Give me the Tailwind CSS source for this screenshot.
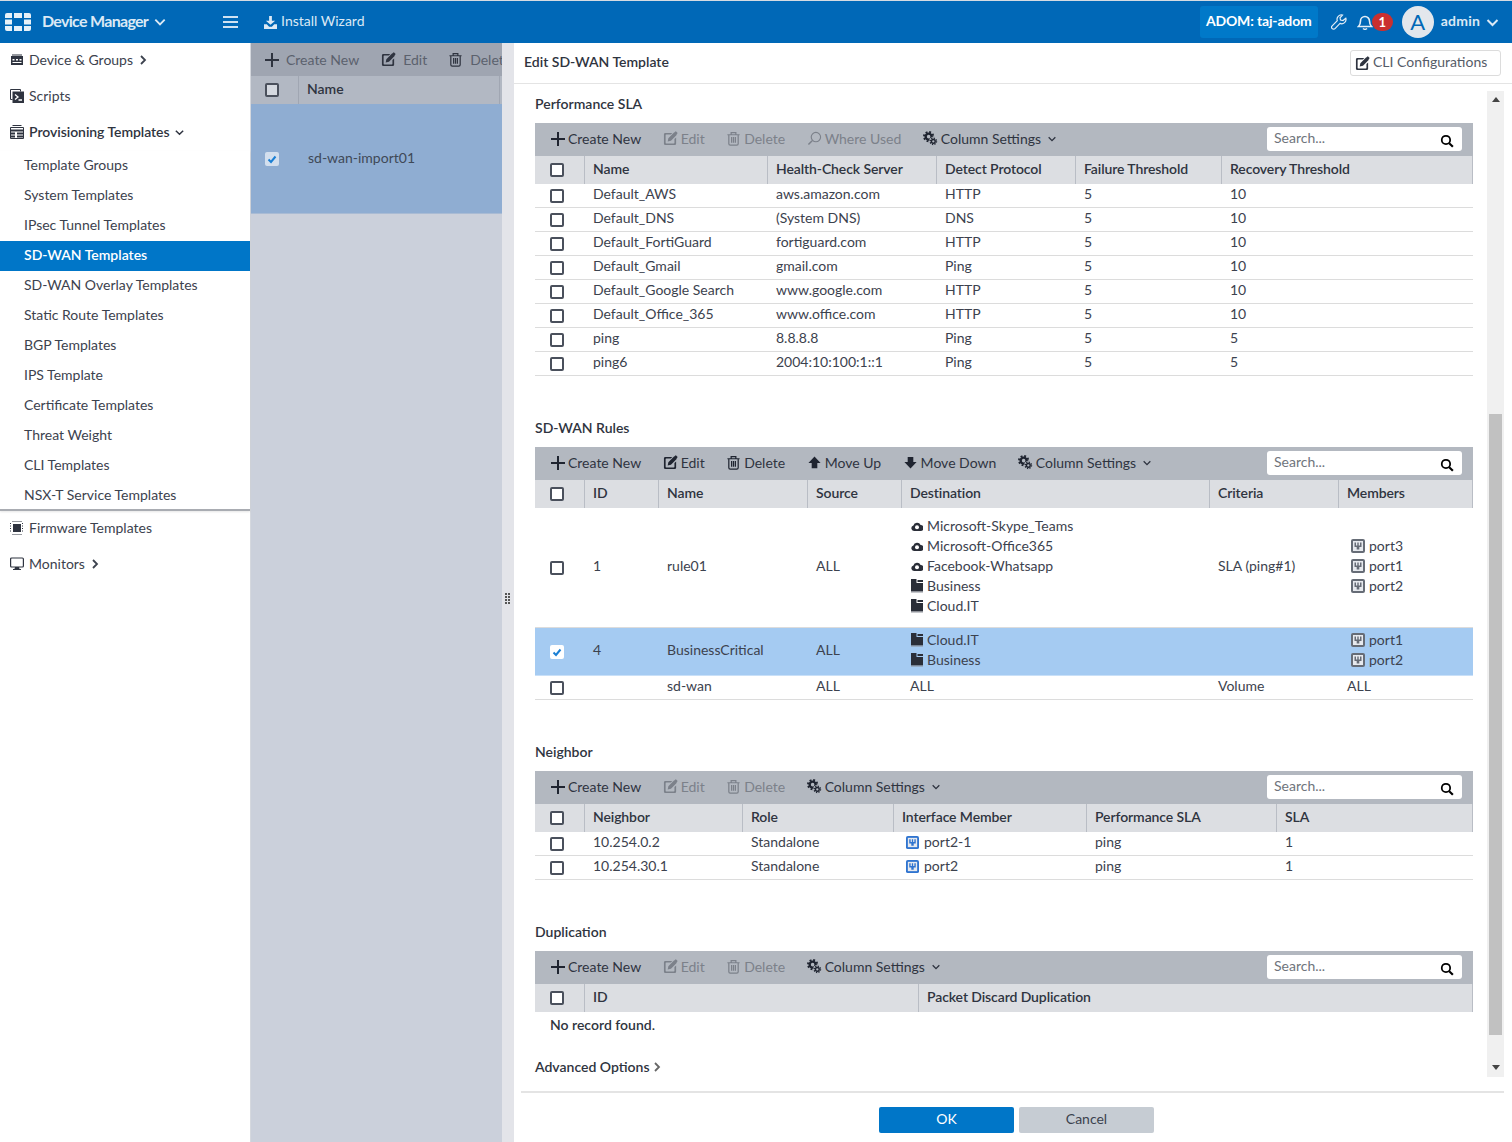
<!DOCTYPE html>
<html lang="en">
<head>
    <meta charset="UTF-8">
    <title>Edit SD-WAN Template</title>
    <script src="https://cdn.jsdelivr.net/npm/@tailwindcss/browser@4"></script>
</head>
<body class="h-[1142px] w-[1512px] overflow-hidden bg-white font-['Lato','Open_Sans',sans-serif] text-[14px] leading-[20px] text-[#3c424e]">
    <!-- icon sprite -->
    <svg class="hidden">
        <symbol id="i-plus" viewBox="0 0 16 16"><path fill="currentColor" d="M7 1h2v6h6v2H9v6H7V9H1V7h6z"/></symbol>
        <symbol id="i-edit" viewBox="0 0 16 16"><path fill="currentColor" d="M2.5 2H10L8.2 3.8H3.5a.7.7 0 0 0-.7.7v8a.7.7 0 0 0 .7.7h8a.7.7 0 0 0 .7-.7V8.6L14 6.8v6.7a1.5 1.5 0 0 1-1.5 1.5h-10A1.5 1.5 0 0 1 1 13.500v-10A1.500 1.500 0 0 1 2.500 2zM12 1.200l2.800 2.800-6.300 6.500-3.500.7.700-3.500zM13.200 .6l.5-.3 1.900 1.900-.3.500-1 1-2.100-2.100z"/></symbol>
        <symbol id="i-trash" viewBox="0 0 16 16"><path fill="none" stroke="currentColor" stroke-width="1.300" d="M1.500 4h13M3 4v9.500A1.500 1.500 0 0 0 4.500 15h7a1.500 1.500 0 0 0 1.500-1.500V4M5.500 4V1.700h5V4M6 6.500v6M8 6.500v6M10 6.500v6"/></symbol>
        <symbol id="i-where" viewBox="0 0 16 16"><circle cx="9.500" cy="6.500" r="5" fill="none" stroke="currentColor" stroke-width="1.200"/><path stroke="currentColor" stroke-width="1.600" d="M5.500 10.500 1.500 14.500"/></symbol>
        <symbol id="i-gears" viewBox="0 0 16 16"><circle cx="6" cy="6" r="3.200" fill="none" stroke="currentColor" stroke-width="2.600"/><circle cx="6" cy="6" r="5" fill="none" stroke="currentColor" stroke-width="2" stroke-dasharray="2 1.930"/><circle cx="11" cy="11" r="4.700" fill="#b3b8c0"/><circle cx="11" cy="11" r="2" fill="none" stroke="currentColor" stroke-width="1.500"/><circle cx="11" cy="11" r="3.400" fill="none" stroke="currentColor" stroke-width="1.500" stroke-dasharray="1.300 1.370"/></symbol>
        <symbol id="i-cloud" viewBox="0 0 12 12"><path fill="currentColor" d="M3 11a2.800 2.800 0 0 1-.6-5.500A3.800 3.800 0 0 1 9.600 5 3 3 0 0 1 9.500 11z"/><circle cx="6" cy="7.300" r="2" fill="#fff"/></symbol>
        <symbol id="i-group" viewBox="0 0 12 14"><path fill="currentColor" d="M0 0h5.500v4H12v8.500H0zM6.500 1H12v2H6.500z"/><path fill="#8b8f96" d="M0 12.500h12V13.500H0z"/></symbol>
        <symbol id="i-port" viewBox="0 0 14 14"><rect width="14" height="14" rx="2" fill="currentColor"/><rect x="2" y="2" width="10" height="10" fill="#e6e9ee"/><path fill="currentColor" d="M3.500 3.500h1.500v3h1.300v-3h1.400v3H9v-3h1.500V8H8.300v2.500H5.700V8H3.500z"/></symbol>
        <symbol id="i-search" viewBox="0 0 16 16"><circle cx="6.800" cy="6.800" r="4.800" fill="none" stroke="currentColor" stroke-width="2"/><path stroke="currentColor" stroke-width="2.400" d="m10.500 10.500 4.200 4.200"/></symbol>
        <symbol id="i-chev" viewBox="0 0 12 12"><path fill="none" stroke="currentColor" stroke-width="1.600" d="m2 4 4 4 4-4"/></symbol>
        <symbol id="i-right" viewBox="0 0 12 12"><path fill="none" stroke="currentColor" stroke-width="1.800" d="m4 2 4 4-4 4"/></symbol>
        <symbol id="i-check" viewBox="0 0 14 14"><path fill="none" stroke="#1a7fd4" stroke-width="2" d="m3.500 7.500 2.500 2.500 4.500-5.500"/></symbol>
    </svg>

    <!-- top bar -->
    <header class="flex h-[43px] items-center border-t border-t-[#d5dbe2] bg-[#0068b7] text-white">
        <svg class="ml-[5px] h-[18px] w-[26px] shrink-0" viewBox="0 0 26 18" fill="#e8f1f8">
            <path d="M2 0h5v5H0V2a2 2 0 0 1 2-2zM9 0h8v5H9zM19 0h5a2 2 0 0 1 2 2v3h-7zM0 6.500h7v5H0zM19 6.500h7v5h-7zM0 13h7v5H2a2 2 0 0 1-2-2zM9 13h8v5H9zM19 13h7v3a2 2 0 0 1-2 2h-5z"/>
        </svg>
        <span class="ml-[11px] -mt-[2px] text-[16px] font-bold tracking-[-0.7px] text-[#dbe9f5]">Device Manager</span>
        <svg class="ml-[5px] h-[14px] w-[14px] text-[#dbe9f5]"><use href="#i-chev"/></svg>
        <div class="ml-[56px] flex h-[12px] w-[15px] flex-col justify-between">
            <i class="block h-[2px] bg-[#cfe2f2]"></i><i class="block h-[2px] bg-[#cfe2f2]"></i><i class="block h-[2px] bg-[#cfe2f2]"></i>
        </div>
        <svg class="ml-[26px] h-[13px] w-[13px]" viewBox="0 0 14 14" fill="#dbe9f5"><path d="M5.500 0h3v5H12L7 9.500 2 5h3.500zM0 9h3l2.500 2.500h3L11 9h3v5H0z"/></svg>
        <span class="ml-[4px] -mt-[2px] text-[#dbe9f5]">Install Wizard</span>

        <div class="ml-auto flex h-[32px] w-[118px] items-center justify-center rounded-[3px] bg-[#0079c9] pb-[2px] font-bold tracking-[-0.15px]">ADOM: taj-adom</div>
        <svg class="ml-[13px] h-[16px] w-[16px]" viewBox="0 0 16 16" fill="none" stroke="#e4eef7" stroke-width="1.200"><path d="M14.800 4.200 12 6.500 9.500 6 9 3.800l2.500-2.700a4.300 4.300 0 0 0-5.200 5.600L1.200 11.800a1.900 1.900 0 0 0 2.800 2.800l5-5.200a4.300 4.300 0 0 0 5.800-5.200z"/></svg>
        <svg class="ml-[10px] h-[16px] w-[16px]" viewBox="0 0 16 16" fill="none" stroke="#e4eef7" stroke-width="1.600"><path d="M1.500 12.500c1.500-1.500 2-2.500 2-5.500a4.500 4.500 0 0 1 9 0c0 3 .5 4 2 5.500zM6 14.500c1 1 3 1 4 0"/></svg>
        <span class="-ml-[1px] flex h-[18px] w-[21px] items-center justify-center rounded-full bg-[#c9302f] text-[13px] font-bold">1</span>
        <span class="ml-[9px] flex h-[32px] w-[32px] items-center justify-center rounded-full bg-[#e3e7ec] text-[22px] text-[#0068b7]">A</span>
        <span class="ml-[7px] -mt-[2px] font-bold tracking-[0.2px] text-[#dbe9f5]">admin</span>
        <svg class="ml-[5px] mr-[12px] h-[15px] w-[15px] text-[#dbe9f5]"><use href="#i-chev"/></svg>
    </header>

    <div class="flex h-[1099px]">
        <!-- left nav -->
        <nav class="w-[251px] shrink-0 border-r border-[#d5d8de]">
            <a class="mb-[1px] flex h-[34px] items-center pl-[10px]">
                <svg class="h-[14px] w-[14px]" viewBox="0 0 14 14" fill="#2f3440"><path d="M1 3h12v9H1zm1.500 3v1.500h2V6zm3.500 0v1.500h2V6zm3.500 0v1.500h2V6zM2.500 9v1h9V9zM2 1.500h10V2.500H2z"/></svg>
                <span class="ml-[5px]">Device &amp; Groups</span>
                <svg class="ml-[4px] h-[12px] w-[12px]"><use href="#i-right"/></svg>
            </a>
            <a class="flex h-[36px] items-center pl-[10px]">
                <svg class="h-[14px] w-[14px]" viewBox="0 0 14 14"><path fill="none" stroke="#2f3440" d="M.5.5h10v2M.5.5v10h2"/><path fill="#2f3440" d="M2.500 2.500H14V14H2.500z"/><path fill="none" stroke="#fff" stroke-width="1.300" d="m5 5.500 3 2.500-3 2.500M8.500 11H12"/></svg>
                <span class="ml-[5px]">Scripts</span>
            </a>
            <a class="flex h-[36px] items-center pl-[10px] font-semibold text-[#2f3440]">
                <svg class="h-[14px] w-[14px]" viewBox="0 0 14 14" fill="none" stroke="#2f3440"><path d="M.5 2.500h13v11H.5zM2.500.5h9"/><path stroke-width="2" d="M1 5.500h12M1 8.500h4M7 8.500h6M1 11.500h4M7 11.500h6"/></svg>
                <span class="ml-[5px] tracking-[-0.05px]">Provisioning Templates</span>
                <svg class="ml-[4px] h-[11px] w-[11px]"><use href="#i-chev"/></svg>
            </a>
            <ul class="mt-[1px] border-b-2 border-[#a9acb2] shadow-[0_1px_2px_rgba(0,0,0,0.1)]">
                <li class="flex h-[30px] items-center pb-[2px] pl-[24px]">Template Groups</li>
                <li class="flex h-[30px] items-center pb-[2px] pl-[24px]">System Templates</li>
                <li class="flex h-[30px] items-center pb-[2px] pl-[24px]">IPsec Tunnel Templates</li>
                <li class="flex h-[30px] items-center bg-[#0076c8] pb-[2px] pl-[24px] font-semibold text-white">SD-WAN Templates</li>
                <li class="flex h-[30px] items-center pb-[2px] pl-[24px]">SD-WAN Overlay Templates</li>
                <li class="flex h-[30px] items-center pb-[2px] pl-[24px]">Static Route Templates</li>
                <li class="flex h-[30px] items-center pb-[2px] pl-[24px]">BGP Templates</li>
                <li class="flex h-[30px] items-center pb-[2px] pl-[24px]">IPS Template</li>
                <li class="flex h-[30px] items-center pb-[2px] pl-[24px]">Certificate Templates</li>
                <li class="flex h-[30px] items-center pb-[2px] pl-[24px]">Threat Weight</li>
                <li class="flex h-[30px] items-center pb-[2px] pl-[24px]">CLI Templates</li>
                <li class="flex h-[28px] items-center pl-[24px]">NSX-T Service Templates</li>
            </ul>
            <a class="flex h-[34px] items-center pl-[10px]">
                <svg class="h-[14px] w-[14px]" viewBox="0 0 14 14" fill="#2f3440"><path d="M3 3h8v8H3z"/><path stroke="#2f3440" stroke-dasharray="1 1" d="M0 2.500h2M0 5h2M0 7.500h2M0 10h2M12 2.500h2M12 5h2M12 7.500h2M12 10h2M3 1V0M5 1V0M7 1V0M9 1V0M11 1V0M3 14v-1M5 14v-1M7 14v-1M9 14v-1M11 14v-1"/></svg>
                <span class="ml-[5px]">Firmware Templates</span>
            </a>
            <a class="mt-[1px] flex h-[36px] items-center pl-[10px]">
                <svg class="h-[14px] w-[14px]" viewBox="0 0 14 14" fill="none" stroke="#2f3440" stroke-width="1.200"><rect x=".6" y="1" width="12.800" height="9" rx="1"/><path fill="#2f3440" stroke="none" d="M5 10h4l.5 2H11v1H3v-1h1.500z"/></svg>
                <span class="ml-[5px]">Monitors</span>
                <svg class="ml-[4px] h-[12px] w-[12px]"><use href="#i-right"/></svg>
            </a>
        </nav>

        <!-- template list -->
        <section class="w-[251px] shrink-0 overflow-hidden bg-[#cbd0db]">
            <div class="flex h-[33px] items-center whitespace-nowrap bg-[#9fa5b1] pl-[13px] text-[#5b616d]">
                <svg class="h-[16px] w-[16px] shrink-0 text-[#2f3440]"><use href="#i-plus"/></svg>
                <span class="ml-[6px]">Create New</span>
                <svg class="ml-[22px] h-[15px] w-[15px] shrink-0 text-[#2f3440]"><use href="#i-edit"/></svg>
                <span class="ml-[7px]">Edit</span>
                <svg class="ml-[21px] h-[15px] w-[15px] shrink-0 text-[#2f3440]"><use href="#i-trash"/></svg>
                <span class="ml-[7px]">Delete</span>
            </div>
            <div class="flex h-[28px] items-center bg-[#b2b8c3] font-semibold text-[#2f3440]">
                <span class="flex h-full w-[48px] items-center border-r border-[#a0a6b2] pl-[14px]">
                    <i class="block h-[14px] w-[14px] rounded-[2px] border-2 border-[#4a505c] bg-[#d5d9e0]"></i>
                </span>
                <span class="flex h-full w-[201px] items-center border-r border-[#a0a6b2] pb-[2px] pl-[8px]">Name</span>
            </div>
            <div class="flex h-[110px] items-center border-b border-[#a9bbd4] bg-[#8fadd2] pl-[14px] text-[#3f4957]">
                <span class="flex h-[14px] w-[14px] rounded-[2px] bg-[#d3dfee]"><svg class="h-[14px] w-[14px]"><use href="#i-check"/></svg></span>
                <span class="ml-[29px] -mt-[2px]">sd-wan-import01</span>
            </div>
        </section>

        <!-- splitter -->
        <div class="flex w-[12px] shrink-0 items-center justify-center bg-[#e3e4e9]">
            <div class="mr-[1px] mt-[12px] grid grid-cols-2 gap-x-[1px] gap-y-[1px]">
                <i class="block h-[2px] w-[2px] bg-[#555]"></i><i class="block h-[2px] w-[2px] bg-[#555]"></i>
                <i class="block h-[2px] w-[2px] bg-[#555]"></i><i class="block h-[2px] w-[2px] bg-[#555]"></i>
                <i class="block h-[2px] w-[2px] bg-[#555]"></i><i class="block h-[2px] w-[2px] bg-[#555]"></i>
                <i class="block h-[2px] w-[2px] bg-[#555]"></i><i class="block h-[2px] w-[2px] bg-[#555]"></i>
            </div>
        </div>

        <!-- edit pane -->
        <main class="flex min-w-0 flex-1 flex-col">
            <div class="flex h-[41px] shrink-0 items-center justify-between border-b border-[#e4e4e4] pl-[10px] pr-[11px]">
                <h1 class="-mt-[2px] font-semibold text-[#2f3440]">Edit SD-WAN Template</h1>
                <button class="flex h-[26px] w-[151px] items-center rounded-[3px] border border-[#dcdcdc] pb-[2px] pl-[4px] text-[#565c68]">
                    <svg class="mt-[2px] h-[15px] w-[15px] text-[#2f3440]"><use href="#i-edit"/></svg>
                    <span class="ml-[3px]">CLI Configurations</span>
                </button>
            </div>

            <div class="flex min-h-0 flex-1">
                <div class="w-[973px] shrink-0 pl-[21px] pt-[8px] [&_td]:pl-[9px] [&_td]:pr-2 [&_th]:pb-[2px] [&_th]:pl-[8px] [&_th]:tracking-[-0.1px]">
                    <!-- Performance SLA -->
                    <h2 class="mb-[7px] h-[24px] font-semibold leading-[24px] text-[#2f3440]">Performance SLA</h2>
                    <div class="flex h-[33px] w-[938px] items-center justify-between bg-[#b3b8c0] pl-[15px] pr-[11px] text-[#2f3440]">
                        <div class="flex items-center gap-[21.5px] pb-[2px]">
                            <span class="flex items-center gap-[2px]"><svg class="h-[16px] w-[16px] text-[#1f2430]"><use href="#i-plus"/></svg>Create New</span>
                            <span class="flex items-center gap-[3px] text-[#7c818a]"><svg class="h-[15px] w-[15px]"><use href="#i-edit"/></svg>Edit</span>
                            <span class="flex items-center gap-[3px] text-[#7c818a]"><svg class="h-[15px] w-[15px]"><use href="#i-trash"/></svg>Delete</span>
                            <span class="flex items-center gap-[3px] text-[#7c818a]"><svg class="h-[15px] w-[15px]"><use href="#i-where"/></svg>Where Used</span>
                            <span class="flex items-center gap-[3px]"><svg class="h-[15px] w-[15px] text-[#1f2430]"><use href="#i-gears"/></svg>Column Settings<svg class="ml-[3px] h-[10px] w-[10px]"><use href="#i-chev"/></svg></span>
                        </div>
                        <label class="-mt-[1px] flex h-[24px] w-[195px] items-center justify-between rounded-[3px] bg-white pb-[3px] pl-[7px] pr-[8px] text-[#6f747c]">Search...<svg class="mt-[6px] h-[14px] w-[14px] text-black"><use href="#i-search"/></svg></label>
                    </div>
                    <table class="w-[938px] table-fixed border-separate border-spacing-0">
                        <colgroup><col class="w-[49px]"><col class="w-[183px]"><col class="w-[169px]"><col class="w-[139px]"><col class="w-[146px]"><col></colgroup>
                        <thead class="bg-[#dcdee2] text-left font-semibold text-[#2f3440]">
                            <tr>
                                <th class="h-[28px] !pl-[15px] !pb-0"><i class="block h-[14px] w-[14px] rounded-[2px] border-2 border-[#4a505c] bg-white"></i></th>
                                <th class="border-l border-[#b9bdc5] font-semibold">Name</th>
                                <th class="border-l border-[#b9bdc5] font-semibold">Health-Check Server</th>
                                <th class="border-l border-[#b9bdc5] font-semibold">Detect Protocol</th>
                                <th class="border-l border-[#b9bdc5] font-semibold">Failure Threshold</th>
                                <th class="border-x border-[#b9bdc5] font-semibold">Recovery Threshold</th>
                            </tr>
                        </thead>
                        <tbody class="[&_td]:h-[24px] [&_td]:border-b [&_td]:border-[#dcdcdc] [&_td]:align-top">
                            <tr><td class="!pl-[15px]"><i class="mt-[5px] block h-[14px] w-[14px] rounded-[2px] border-2 border-[#4a505c]"></i></td><td>Default_AWS</td><td>aws.amazon.com</td><td>HTTP</td><td>5</td><td>10</td></tr>
                            <tr><td class="!pl-[15px]"><i class="mt-[5px] block h-[14px] w-[14px] rounded-[2px] border-2 border-[#4a505c]"></i></td><td>Default_DNS</td><td>(System DNS)</td><td>DNS</td><td>5</td><td>10</td></tr>
                            <tr><td class="!pl-[15px]"><i class="mt-[5px] block h-[14px] w-[14px] rounded-[2px] border-2 border-[#4a505c]"></i></td><td>Default_FortiGuard</td><td>fortiguard.com</td><td>HTTP</td><td>5</td><td>10</td></tr>
                            <tr><td class="!pl-[15px]"><i class="mt-[5px] block h-[14px] w-[14px] rounded-[2px] border-2 border-[#4a505c]"></i></td><td>Default_Gmail</td><td>gmail.com</td><td>Ping</td><td>5</td><td>10</td></tr>
                            <tr><td class="!pl-[15px]"><i class="mt-[5px] block h-[14px] w-[14px] rounded-[2px] border-2 border-[#4a505c]"></i></td><td>Default_Google Search</td><td>www.google.com</td><td>HTTP</td><td>5</td><td>10</td></tr>
                            <tr><td class="!pl-[15px]"><i class="mt-[5px] block h-[14px] w-[14px] rounded-[2px] border-2 border-[#4a505c]"></i></td><td>Default_Office_365</td><td>www.office.com</td><td>HTTP</td><td>5</td><td>10</td></tr>
                            <tr><td class="!pl-[15px]"><i class="mt-[5px] block h-[14px] w-[14px] rounded-[2px] border-2 border-[#4a505c]"></i></td><td>ping</td><td>8.8.8.8</td><td>Ping</td><td>5</td><td>5</td></tr>
                            <tr><td class="!pl-[15px]"><i class="mt-[5px] block h-[14px] w-[14px] rounded-[2px] border-2 border-[#4a505c]"></i></td><td>ping6</td><td>2004:10:100:1::1</td><td>Ping</td><td>5</td><td>5</td></tr>
                        </tbody>
                    </table>

                    <!-- SD-WAN Rules -->
                    <h2 class="mb-[7px] mt-[40px] h-[24px] font-semibold leading-[24px] text-[#2f3440]">SD-WAN Rules</h2>
                    <div class="flex h-[33px] w-[938px] items-center justify-between bg-[#b3b8c0] pl-[15px] pr-[11px] text-[#2f3440]">
                        <div class="flex items-center gap-[21.5px] pb-[2px]">
                            <span class="flex items-center gap-[2px]"><svg class="h-[16px] w-[16px] text-[#1f2430]"><use href="#i-plus"/></svg>Create New</span>
                            <span class="flex items-center gap-[3px]"><svg class="h-[15px] w-[15px] text-[#1f2430]"><use href="#i-edit"/></svg>Edit</span>
                            <span class="flex items-center gap-[3px]"><svg class="h-[15px] w-[15px] text-[#1f2430]"><use href="#i-trash"/></svg>Delete</span>
                            <span class="flex items-center gap-[3px]"><svg class="h-[15px] w-[15px] text-[#1f2430]" viewBox="0 0 16 16"><path fill="currentColor" d="M8 1.500 14.500 8.500H11V14H5V8.500H1.500z"/></svg>Move Up</span>
                            <span class="flex items-center gap-[3px]"><svg class="h-[15px] w-[15px] text-[#1f2430]" viewBox="0 0 16 16"><path fill="currentColor" d="M8 14.500 1.500 7.500H5V2h6v5.500h3.500z"/></svg>Move Down</span>
                            <span class="flex items-center gap-[3px]"><svg class="h-[15px] w-[15px] text-[#1f2430]"><use href="#i-gears"/></svg>Column Settings<svg class="ml-[3px] h-[10px] w-[10px]"><use href="#i-chev"/></svg></span>
                        </div>
                        <label class="-mt-[1px] flex h-[24px] w-[195px] items-center justify-between rounded-[3px] bg-white pb-[3px] pl-[7px] pr-[8px] text-[#6f747c]">Search...<svg class="mt-[6px] h-[14px] w-[14px] text-black"><use href="#i-search"/></svg></label>
                    </div>
                    <table class="w-[938px] table-fixed border-separate border-spacing-0">
                        <colgroup><col class="w-[49px]"><col class="w-[74px]"><col class="w-[149px]"><col class="w-[94px]"><col class="w-[308px]"><col class="w-[129px]"><col></colgroup>
                        <thead class="bg-[#dcdee2] text-left text-[#2f3440]">
                            <tr>
                                <th class="h-[28px] !pl-[15px] !pb-0"><i class="block h-[14px] w-[14px] rounded-[2px] border-2 border-[#4a505c] bg-white"></i></th>
                                <th class="border-l border-[#b9bdc5] font-semibold">ID</th>
                                <th class="border-l border-[#b9bdc5] font-semibold">Name</th>
                                <th class="border-l border-[#b9bdc5] font-semibold">Source</th>
                                <th class="border-l border-[#b9bdc5] font-semibold">Destination</th>
                                <th class="border-l border-[#b9bdc5] font-semibold">Criteria</th>
                                <th class="border-x border-[#b9bdc5] font-semibold">Members</th>
                            </tr>
                        </thead>
                        <tbody>
                            <tr>
                                <td class="h-[119px] border-b border-[#dcdcdc] !pl-[15px]"><i class="block h-[14px] w-[14px] rounded-[2px] border-2 border-[#4a505c]"></i></td>
                                <td class="border-b border-[#dcdcdc] pb-[3px]">1</td><td class="border-b border-[#dcdcdc] pb-[3px]">rule01</td><td class="border-b border-[#dcdcdc] pb-[3px]">ALL</td>
                                <td class="border-b border-[#dcdcdc] align-top"><div class="mb-[11px] ml-[1px] mt-[8px] flex flex-col">
                                    <span class="flex h-[20px] items-center gap-[4px]"><svg class="h-[12px] w-[12px] text-[#2a2e38]"><use href="#i-cloud"/></svg>Microsoft-Skype_Teams</span>
                                    <span class="flex h-[20px] items-center gap-[4px]"><svg class="h-[12px] w-[12px] text-[#2a2e38]"><use href="#i-cloud"/></svg>Microsoft-Office365</span>
                                    <span class="flex h-[20px] items-center gap-[4px]"><svg class="h-[12px] w-[12px] text-[#2a2e38]"><use href="#i-cloud"/></svg>Facebook-Whatsapp</span>
                                    <span class="flex h-[20px] items-center gap-[4px]"><svg class="h-[14px] w-[12px] text-[#2a2e38]"><use href="#i-group"/></svg>Business</span>
                                    <span class="flex h-[20px] items-center gap-[4px]"><svg class="h-[14px] w-[12px] text-[#2a2e38]"><use href="#i-group"/></svg>Cloud.IT</span>
                                </div></td>
                                <td class="border-b border-[#dcdcdc] pb-[3px]">SLA (ping#1)</td>
                                <td class="border-b border-[#dcdcdc] pb-[3px]"><div class="flex flex-col pl-[4px]">
                                    <span class="flex h-[20px] items-center gap-[4px]"><svg class="h-[14px] w-[14px] text-[#666c76]"><use href="#i-port"/></svg>port3</span>
                                    <span class="flex h-[20px] items-center gap-[4px]"><svg class="h-[14px] w-[14px] text-[#666c76]"><use href="#i-port"/></svg>port1</span>
                                    <span class="flex h-[20px] items-center gap-[4px]"><svg class="h-[14px] w-[14px] text-[#666c76]"><use href="#i-port"/></svg>port2</span>
                                </div></td>
                            </tr>
                            <tr class="bg-[#a5cbf2]">
                                <td class="h-[48px] border-b border-[#c9e0f8] !pl-[15px] pb-[4px]"><span class="mt-[4px] flex h-[14px] w-[14px] rounded-[2px] bg-white"><svg class="h-[14px] w-[14px]"><use href="#i-check"/></svg></span></td>
                                <td class="border-b border-[#c9e0f8] pb-[4px]">4</td><td class="border-b border-[#c9e0f8] pb-[4px]">BusinessCritical</td><td class="border-b border-[#c9e0f8] pb-[4px]">ALL</td>
                                <td class="border-b border-[#c9e0f8] align-top"><div class="ml-[1px] mt-[2px] flex flex-col">
                                    <span class="flex h-[20px] items-center gap-[4px]"><svg class="h-[14px] w-[12px] text-[#2a2e38]"><use href="#i-group"/></svg>Cloud.IT</span>
                                    <span class="flex h-[20px] items-center gap-[4px]"><svg class="h-[14px] w-[12px] text-[#2a2e38]"><use href="#i-group"/></svg>Business</span>
                                </div></td>
                                <td class="border-b border-[#c9e0f8]"></td>
                                <td class="border-b border-[#c9e0f8] pb-[4px]"><div class="flex flex-col pl-[4px]">
                                    <span class="flex h-[20px] items-center gap-[4px]"><svg class="h-[14px] w-[14px] text-[#666c76]"><use href="#i-port"/></svg>port1</span>
                                    <span class="flex h-[20px] items-center gap-[4px]"><svg class="h-[14px] w-[14px] text-[#666c76]"><use href="#i-port"/></svg>port2</span>
                                </div></td>
                            </tr>
                            <tr class="[&_td]:h-[24px] [&_td]:border-b [&_td]:border-[#dcdcdc] [&_td]:align-top">
                                <td class="!pl-[15px]"><i class="mt-[5px] block h-[14px] w-[14px] rounded-[2px] border-2 border-[#4a505c]"></i></td>
                                <td></td><td>sd-wan</td><td>ALL</td><td>ALL</td><td>Volume</td><td>ALL</td>
                            </tr>
                        </tbody>
                    </table>

                    <!-- Neighbor -->
                    <h2 class="mb-[7px] mt-[40px] h-[24px] font-semibold leading-[24px] text-[#2f3440]">Neighbor</h2>
                    <div class="flex h-[33px] w-[938px] items-center justify-between bg-[#b3b8c0] pl-[15px] pr-[11px] text-[#2f3440]">
                        <div class="flex items-center gap-[21.5px] pb-[2px]">
                            <span class="flex items-center gap-[2px]"><svg class="h-[16px] w-[16px] text-[#1f2430]"><use href="#i-plus"/></svg>Create New</span>
                            <span class="flex items-center gap-[3px] text-[#7c818a]"><svg class="h-[15px] w-[15px]"><use href="#i-edit"/></svg>Edit</span>
                            <span class="flex items-center gap-[3px] text-[#7c818a]"><svg class="h-[15px] w-[15px]"><use href="#i-trash"/></svg>Delete</span>
                            <span class="flex items-center gap-[3px]"><svg class="h-[15px] w-[15px] text-[#1f2430]"><use href="#i-gears"/></svg>Column Settings<svg class="ml-[3px] h-[10px] w-[10px]"><use href="#i-chev"/></svg></span>
                        </div>
                        <label class="-mt-[1px] flex h-[24px] w-[195px] items-center justify-between rounded-[3px] bg-white pb-[3px] pl-[7px] pr-[8px] text-[#6f747c]">Search...<svg class="mt-[6px] h-[14px] w-[14px] text-black"><use href="#i-search"/></svg></label>
                    </div>
                    <table class="w-[938px] table-fixed border-separate border-spacing-0">
                        <colgroup><col class="w-[49px]"><col class="w-[158px]"><col class="w-[151px]"><col class="w-[193px]"><col class="w-[190px]"><col></colgroup>
                        <thead class="bg-[#dcdee2] text-left text-[#2f3440]">
                            <tr>
                                <th class="h-[28px] !pl-[15px] !pb-0"><i class="block h-[14px] w-[14px] rounded-[2px] border-2 border-[#4a505c] bg-white"></i></th>
                                <th class="border-l border-[#b9bdc5] font-semibold">Neighbor</th>
                                <th class="border-l border-[#b9bdc5] font-semibold">Role</th>
                                <th class="border-l border-[#b9bdc5] font-semibold">Interface Member</th>
                                <th class="border-l border-[#b9bdc5] font-semibold">Performance SLA</th>
                                <th class="border-x border-[#b9bdc5] font-semibold">SLA</th>
                            </tr>
                        </thead>
                        <tbody class="[&_td]:h-[24px] [&_td]:border-b [&_td]:border-[#dcdcdc] [&_td]:align-top">
                            <tr><td class="!pl-[15px]"><i class="mt-[5px] block h-[14px] w-[14px] rounded-[2px] border-2 border-[#4a505c]"></i></td><td>10.254.0.2</td><td>Standalone</td><td><span class="flex h-[20px] items-center gap-[5px] pl-[4px]"><svg class="h-[13px] w-[13px] text-[#2f74d0]"><use href="#i-port"/></svg>port2-1</span></td><td>ping</td><td>1</td></tr>
                            <tr><td class="!pl-[15px]"><i class="mt-[5px] block h-[14px] w-[14px] rounded-[2px] border-2 border-[#4a505c]"></i></td><td>10.254.30.1</td><td>Standalone</td><td><span class="flex h-[20px] items-center gap-[5px] pl-[4px]"><svg class="h-[13px] w-[13px] text-[#2f74d0]"><use href="#i-port"/></svg>port2</span></td><td>ping</td><td>1</td></tr>
                        </tbody>
                    </table>

                    <!-- Duplication -->
                    <h2 class="mb-[7px] mt-[40px] h-[24px] font-semibold leading-[24px] text-[#2f3440]">Duplication</h2>
                    <div class="flex h-[33px] w-[938px] items-center justify-between bg-[#b3b8c0] pl-[15px] pr-[11px] text-[#2f3440]">
                        <div class="flex items-center gap-[21.5px] pb-[2px]">
                            <span class="flex items-center gap-[2px]"><svg class="h-[16px] w-[16px] text-[#1f2430]"><use href="#i-plus"/></svg>Create New</span>
                            <span class="flex items-center gap-[3px] text-[#7c818a]"><svg class="h-[15px] w-[15px]"><use href="#i-edit"/></svg>Edit</span>
                            <span class="flex items-center gap-[3px] text-[#7c818a]"><svg class="h-[15px] w-[15px]"><use href="#i-trash"/></svg>Delete</span>
                            <span class="flex items-center gap-[3px]"><svg class="h-[15px] w-[15px] text-[#1f2430]"><use href="#i-gears"/></svg>Column Settings<svg class="ml-[3px] h-[10px] w-[10px]"><use href="#i-chev"/></svg></span>
                        </div>
                        <label class="-mt-[1px] flex h-[24px] w-[195px] items-center justify-between rounded-[3px] bg-white pb-[3px] pl-[7px] pr-[8px] text-[#6f747c]">Search...<svg class="mt-[6px] h-[14px] w-[14px] text-black"><use href="#i-search"/></svg></label>
                    </div>
                    <table class="w-[938px] table-fixed border-separate border-spacing-0">
                        <colgroup><col class="w-[49px]"><col class="w-[334px]"><col></colgroup>
                        <thead class="bg-[#dcdee2] text-left text-[#2f3440]">
                            <tr>
                                <th class="h-[28px] !pl-[15px] !pb-0"><i class="block h-[14px] w-[14px] rounded-[2px] border-2 border-[#4a505c] bg-white"></i></th>
                                <th class="border-l border-[#b9bdc5] font-semibold">ID</th>
                                <th class="border-x border-[#b9bdc5] font-semibold">Packet Discard Duplication</th>
                            </tr>
                        </thead>
                    </table>
                    <p class="mt-[3px] pl-[15px] font-semibold text-[#2f3440]">No record found.</p>
                    <p class="mt-[22px] flex items-center font-semibold text-[#2f3440]">Advanced Options<svg class="ml-[1px] h-[12px] w-[12px] text-[#666]"><use href="#i-right"/></svg></p>
                </div>

                <!-- scrollbar -->
                <div class="mt-[7px] flex h-[986px] w-[17px] flex-col items-center bg-[#f0f0f0]">
                    <svg class="mt-[6px] h-[5px] w-[8px]" viewBox="0 0 8 5"><path fill="#444" d="M4 0l4 5H0z"/></svg>
                    <div class="ml-[-1px] mt-[312px] h-[621px] w-[13px] bg-[#c1c1c1]"></div>
                    <svg class="mt-[30px] h-[5px] w-[8px]" viewBox="0 0 8 5"><path fill="#444" d="M0 0h8L4 5z"/></svg>
                </div>
            </div>

            <footer class="ml-[7px] mr-[8px] flex h-[51px] shrink-0 items-start justify-center gap-[5px] border-t-2 border-[#e4e4e4] pl-[8px] pt-[14px]">
                <button class="h-[26px] w-[135px] rounded-[2px] bg-[#0076c8] pb-[2px] text-white">OK</button>
                <button class="h-[26px] w-[135px] rounded-[2px] bg-[#c6ccd3] pb-[2px] text-[#3c424e]">Cancel</button>
            </footer>
        </main>
    </div>
</body>
</html>
